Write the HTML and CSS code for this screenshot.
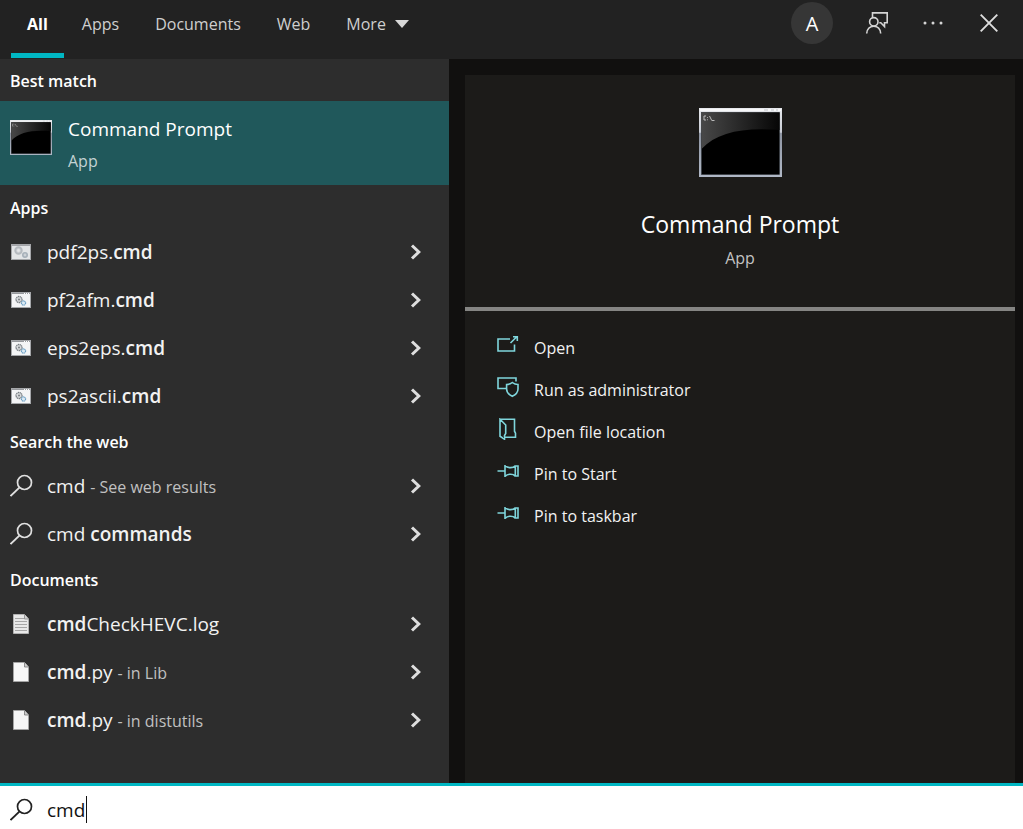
FILE: index.html
```html
<!DOCTYPE html>
<html lang="en">
<head>
<meta charset="utf-8">
<title>Search</title>
<link rel="stylesheet" href="styles.css">
</head>
<body>
<svg class="defs" aria-hidden="true">
  <defs>
    <linearGradient id="gloss" x1="0" y1="0" x2="1" y2="0"><stop offset="0" stop-color="#484848"/><stop offset="1" stop-color="#060606"/></linearGradient>
    <linearGradient id="frame" x1="0" y1="0" x2="0" y2="1"><stop offset="0" stop-color="#e6e8ec"/><stop offset=".35" stop-color="#c8ccd4"/><stop offset=".37" stop-color="#8f96a3"/><stop offset="1" stop-color="#b0b8c6"/></linearGradient>
    <symbol id="i-chevron" viewBox="0 0 12 18"><path d="M2 2.500 8.800 9 2 15.500" fill="none" stroke="#dedede" stroke-width="3"/></symbol>
    <symbol id="i-search" viewBox="0 0 24 24"><circle cx="14.500" cy="8.500" r="7" fill="none" stroke="currentColor" stroke-width="1.700"/><path d="M9.600 13.400.5 22" fill="none" stroke="currentColor" stroke-width="1.900"/></symbol>
    <symbol id="i-terminal" viewBox="0 0 83 69">
      <rect width="83" height="69" fill="url(#frame)"/>
      <rect x="1" y="1" width="81" height="2" fill="#f6f7f8"/>
      <path d="M65 2h4m3 0h3m2 0h2" stroke="#c0c4ca"/>
      <rect x="2.500" y="4.500" width="78" height="62" fill="#000" stroke="#30343a" stroke-width=".6"/>
      <path d="M2.500 4.500h78V22C45 19 18 24 2.500 41z" fill="url(#gloss)"/>
      <path d="M7 8H5v4h2M8.500 9v.8m0 1.600v.8M10.500 8l2 4M12.500 12.500h3" fill="none" stroke="#c8c8c8" stroke-width=".9"/>
    </symbol>
    <symbol id="i-batch" viewBox="0 0 20 16">
      <rect x=".5" y=".5" width="19" height="15" fill="#f4f5f6" stroke="#a5a7aa"/>
      <path d="M1 1.500h18" stroke="#97999d"/><path d="M13 1.500h1m1 0h1m1 0h1" stroke="#fff"/>
      <circle cx="8" cy="7.500" r="3" fill="#d9dcde" stroke="#777d82" stroke-width="1.300" stroke-dasharray="1.300 .5"/><circle cx="8" cy="7.500" r="1" fill="#7b8085"/>
      <circle cx="12.500" cy="11" r="2.100" fill="#dceaf4" stroke="#6a9fc4" stroke-width="1.200" stroke-dasharray="1.200 .4"/>
    </symbol>
    <symbol id="i-gears" viewBox="0 0 20 16">
      <rect x=".5" y=".5" width="19" height="15" fill="#e3e5e7" stroke="#a5a7aa"/>
      <path d="M1 1.500h18" stroke="#a2a4a8"/>
      <circle cx="7.500" cy="6.500" r="3.200" fill="#d4d7da" stroke="#b5babf" stroke-width="2"/><circle cx="7.500" cy="6.500" r="1.200" fill="#e6e8ea"/>
      <circle cx="14" cy="11" r="2.200" fill="#ccd1d6" stroke="#a6b0b9" stroke-width="1.600"/>
    </symbol>
    <symbol id="i-page" viewBox="0 0 16 20"><path d="M.5.5h11L15.500 5v14.500H.5z" fill="#f6f6f6" stroke="#a4a4a4"/><path d="M11.500.5V5h4" fill="#ccc" stroke="#777" stroke-width=".8"/></symbol>
    <symbol id="i-log" viewBox="0 0 16 20"><path d="M.5.5h11L15.500 5v14.500H.5z" fill="#e8e8e8" stroke="#b2b2b2"/><path d="M2 4.500h9M2 7.500h12M2 10.500h12M2 13.500h12M2 16.500h12" stroke="#a6a6a6"/><path d="M11.500.5V5h4" fill="#d2d2d2" stroke="#888" stroke-width=".8"/></symbol>
    <symbol id="i-pin" viewBox="0 0 22 22"><path d="M.5 11H8M8 5v12M8 5.700q2 1.700 4.500 1.900 4 .3 5.500-1.600h3v10h-3q-1.500-2-5.500-1.700Q10 14.600 8 16.300M18.300 6v10" fill="none" stroke="currentColor" stroke-width="1.600"/></symbol>
  </defs>
</svg>
<div class="search">
  <header class="topbar">
    <nav class="tabs">
      <button class="tab active">All</button>
      <button class="tab">Apps</button>
      <button class="tab">Documents</button>
      <button class="tab">Web</button>
      <button class="tab">More<svg class="caret-down" viewBox="0 0 14 8"><path d="M0 0h14L7 8z" fill="#d8d8d8"/></svg></button>
    </nav>
    <div class="tools">
      <button class="avatar">A</button>
      <button class="tool" aria-label="Feedback"><svg viewBox="0 0 24 24" fill="none" stroke="#d5d5d5" stroke-width="1.600"><path d="M7.500 6V1.900h14.700v9.900h-2.700v3.700l-3.700-3.700h-1.500"/><circle cx="8.800" cy="10.800" r="4.200"/><path d="M1.700 22.500C2 18 5 15.200 8.800 15.200S15.400 18 15.700 22.500"/></svg></button>
      <button class="tool" aria-label="Options"><svg viewBox="0 0 24 24" fill="#d5d5d5"><circle cx="4" cy="12" r="1.500"/><circle cx="12" cy="12" r="1.500"/><circle cx="20" cy="12" r="1.500"/></svg></button>
      <button class="tool" aria-label="Close"><svg viewBox="0 0 24 24" fill="none" stroke="#dedede" stroke-width="1.900"><path d="M3.700 3.700l16.600 16.600M20.300 3.700 3.700 20.300"/></svg></button>
    </div>
  </header>
  <main class="body">
    <section class="results">
      <h2>Best match</h2>
      <button class="best"><svg class="best-icon"><use href="#i-terminal"/></svg><span class="best-text"><span class="best-name">Command Prompt</span><span class="kind">App</span></span></button>
      <h2>Apps</h2>
      <button class="row"><span class="icon"><svg class="wide"><use href="#i-gears"/></svg></span><span class="label">pdf2ps.<b>cmd</b></span><svg class="chev"><use href="#i-chevron"/></svg></button>
      <button class="row"><span class="icon"><svg class="wide"><use href="#i-batch"/></svg></span><span class="label">pf2afm.<b>cmd</b></span><svg class="chev"><use href="#i-chevron"/></svg></button>
      <button class="row"><span class="icon"><svg class="wide"><use href="#i-batch"/></svg></span><span class="label">eps2eps.<b>cmd</b></span><svg class="chev"><use href="#i-chevron"/></svg></button>
      <button class="row"><span class="icon"><svg class="wide"><use href="#i-batch"/></svg></span><span class="label">ps2ascii.<b>cmd</b></span><svg class="chev"><use href="#i-chevron"/></svg></button>
      <h2>Search the web</h2>
      <button class="row"><span class="icon"><svg class="lens"><use href="#i-search"/></svg></span><span class="label">cmd <small>- See web results</small></span><svg class="chev"><use href="#i-chevron"/></svg></button>
      <button class="row"><span class="icon"><svg class="lens"><use href="#i-search"/></svg></span><span class="label">cmd <b>commands</b></span><svg class="chev"><use href="#i-chevron"/></svg></button>
      <h2>Documents</h2>
      <button class="row"><span class="icon"><svg class="doc"><use href="#i-log"/></svg></span><span class="label"><b>cmd</b>CheckHEVC.log</span><svg class="chev"><use href="#i-chevron"/></svg></button>
      <button class="row"><span class="icon"><svg class="doc"><use href="#i-page"/></svg></span><span class="label"><b>cmd</b>.py <small>- in Lib</small></span><svg class="chev"><use href="#i-chevron"/></svg></button>
      <button class="row"><span class="icon"><svg class="doc"><use href="#i-page"/></svg></span><span class="label"><b>cmd</b>.py <small>- in distutils</small></span><svg class="chev"><use href="#i-chevron"/></svg></button>
    </section>
    <section class="preview">
      <div class="card">
        <div class="hero">
          <svg class="hero-icon"><use href="#i-terminal"/></svg>
          <h1>Command Prompt</h1>
          <p>App</p>
        </div>
        <div class="actions">
          <button class="action"><svg viewBox="0 0 22 22" fill="none" stroke="currentColor" stroke-width="1.600"><path d="M13 5H1v12h16.500v-6.500M13.500 9l6-6M16 2.700h4.300V7"/></svg>Open</button>
          <button class="action"><svg viewBox="0 0 22 22" fill="none" stroke="currentColor" stroke-width="1.600"><path d="M9 12.500H1V2h18v3.500M15.300 6.500q2.500 2 5.700 2v4.500q0 4.500-5.700 7.300Q9.600 17.500 9.600 13V8.500q3.200 0 5.700-2z"/></svg>Run as administrator</button>
          <button class="action"><svg viewBox="0 0 22 22" fill="none" stroke="currentColor" stroke-width="1.600"><path d="M3 1.200h14.500v12l1 2v4H8M3 1.200v17l4.500 3v-3.700l1.200-2V7z"/></svg>Open file location</button>
          <button class="action"><svg><use href="#i-pin"/></svg>Pin to Start</button>
          <button class="action"><svg><use href="#i-pin"/></svg>Pin to taskbar</button>
        </div>
      </div>
    </section>
  </main>
  <footer class="query">
    <svg class="lens"><use href="#i-search"/></svg>
    <div class="field"><input type="text" value="cmd" aria-label="Search"><span class="cursor"></span></div>
  </footer>
</div>
</body>
</html>
```

FILE: styles.css
```css
* { box-sizing: border-box; }
body { margin: 0; font-family: "Open Sans", "Noto Sans", sans-serif; color: #f2f2f2; background: #11100f; }
button { font: inherit; color: inherit; background: none; border: 0; padding: 0; text-align: left; }
h1, h2, p { margin: 0; font-weight: 400; }
svg { display: block; flex: none; }
.defs { position: absolute; width: 0; height: 0; }
.search { display: flex; flex-direction: column; min-height: 100vh; }

.topbar { display: flex; justify-content: space-between; height: 59px; padding: 0 18px 0 11px; background: #222; }
.tabs { display: flex; }
.tab { display: flex; align-items: center; gap: 9px; padding: 0 18px 6px; border-bottom: 5px solid transparent; margin-bottom: 1px; font-size: 16px; color: #cfcfcf; }
.tab.active { padding: 0 16px 6px; border-color: #00b7c3; color: #fff; font-weight: 700; }
.caret-down { width: 14px; height: 8px; }
.tools { display: flex; align-items: center; gap: 24px; padding-bottom: 13px; }
.avatar { width: 42px; height: 42px; margin-right: 4px; border-radius: 50%; background: #363636; color: #fff; font-size: 20px; text-align: center; }
.tool { width: 32px; display: flex; justify-content: center; }
.tool svg { width: 24px; height: 24px; }

.body { flex: 1; display: grid; grid-template-columns: 439fr 561fr; }
.results { background: #2d2d2d; padding-bottom: 39px; }
h2 { height: 42px; line-height: 44px; padding-left: 10px; font-size: 16px; font-weight: 600; color: #fff; }
.best { display: flex; width: 100%; height: 84px; margin-bottom: 1px; padding: 12px 10px; gap: 16px; background: #20585b; }
.best-icon { width: 42px; height: 35px; margin-top: 7px; }
.best-text { display: flex; flex-direction: column; gap: 3px; }
.best-name { font-size: 19px; line-height: 32px; color: #fff; }
.kind { font-size: 16px; line-height: 26px; color: #c3d2d3; }
.row { display: flex; align-items: center; gap: 13px; width: 100%; height: 48px; padding: 0 27px 0 10px; }
.icon { display: flex; justify-content: center; width: 24px; padding-right: 2px; }
.wide { width: 20px; height: 16px; }
.doc { width: 16px; height: 20px; }
.lens { width: 24px; height: 24px; color: #e0e0e0; }
.icon .lens { margin-right: -2px; }
.label { flex: 1; font-size: 19px; line-height: 28px; }
.label b { font-weight: 600; }
.label small { font-size: 16px; color: #c0c0c0; }
.chev { width: 12px; height: 18px; }

.preview { display: flex; padding: 16px 8px 0 16px; background: #11100f; }
.card { flex: 1; background: #1c1b19; }
.hero { display: flex; flex-direction: column; align-items: center; height: 236px; padding-top: 33px; border-bottom: 4px solid #858583; }
.hero-icon { width: 83px; height: 69px; }
h1 { margin-top: 30px; font-size: 23px; line-height: 34px; color: #fff; }
.hero p { margin-top: 4px; font-size: 16px; line-height: 26px; color: #c3c3c3; }
.actions { padding: 16px 32px; }
.action { display: flex; align-items: center; gap: 15px; width: 100%; height: 42px; font-size: 16px; }
.action svg { width: 22px; height: 22px; margin-bottom: 6px; color: #7fd6dc; }

.query { display: flex; align-items: center; gap: 13px; height: 46px; padding: 4px 10px 0; border-top: 3px solid #00b7c3; background: #fff; }
.query .lens { color: #222; }
.field { position: relative; flex: 1; }
input { display: block; width: 100%; padding: 0; border: 0; outline: 0; font: inherit; font-size: 19px; line-height: 28px; color: #111; background: none; }
.cursor { position: absolute; left: 39px; top: 0; width: 1px; height: 27px; background: #111; }
```
